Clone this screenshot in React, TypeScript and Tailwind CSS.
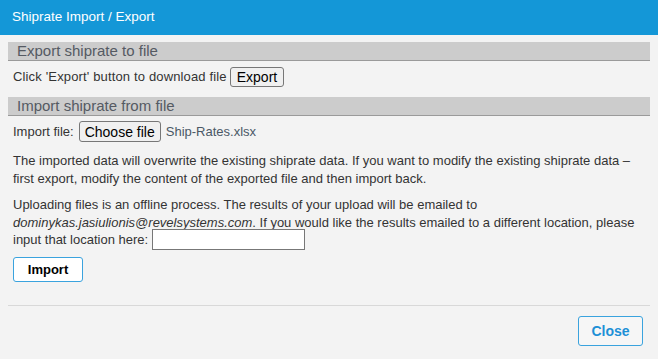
export default function App() {
  return (
    <div className="flex h-[359px] w-[658px] flex-col bg-[#f3f3f3] font-['Liberation_Sans',Arial,sans-serif] text-[13px] text-[#333]">
      <div className="flex h-[35px] shrink-0 items-center bg-[#1497d7] px-3 text-[13.5px] text-white">
        Shiprate Import / Export
      </div>

      <div className="px-2 pt-[7px]">
        <div className="h-[19px] border-b border-[#9a9a9a] bg-[#cccccc] px-[9px] text-[15px] leading-[18px] text-[#555a63]">
          Export shiprate to file
        </div>
        <div className="mt-[6px] flex items-center px-[5px]">
          <span className="tracking-[0.15px]">Click 'Export' button to download file</span>
          <button className="ml-[3px] h-[20px] rounded-[3px] border border-[#777] bg-[#f0f0f0] px-[6px] text-[14px] leading-none text-black">
            Export
          </button>
        </div>

        <div className="mt-[10px] h-[19px] border-b border-[#9a9a9a] bg-[#cccccc] px-[9px] text-[15px] leading-[18px] text-[#555a63]">
          Import shiprate from file
        </div>
        <div className="mt-[5px] flex items-center px-[5px]">
          <span>Import file:</span>
          <button className="ml-[5px] h-[21px] rounded-[3px] border border-[#777] bg-[#f0f0f0] px-[5px] text-[14px] leading-none text-black">
            Choose file
          </button>
          <span className="ml-[5px] text-[#4a5866]">Ship-Rates.xlsx</span>
        </div>

        <p className="mt-[10px] px-[5px] leading-[18px]">
          The imported data will overwrite the existing shiprate data. If you want to modify the existing shiprate data –
          first export, modify the content of the exported file and then import back.
        </p>
        <div className="mt-[8px] px-[5px] leading-[18px]">
          <p>
            Uploading files is an offline process. The results of your upload will be emailed to{" "}
            <i>dominykas.jasiulionis@revelsystems.com</i>. If you would like the results emailed to a different location,
            please
          </p>
          <div className="-mt-[3px] flex items-center gap-[4px]">
            <span>input that location here:</span>
            <input className="h-[21px] w-[153px] border border-[#777] bg-white" />
          </div>
        </div>

        <div className="mt-[7px] px-[5px]">
          <button className="h-[25px] w-[70px] rounded-[3px] border border-[#3aa3de] bg-white text-[13px] font-bold text-black">
            Import
          </button>
        </div>

        <div className="mt-[23px] border-t border-[#d8d8d8]" />

        <div className="flex justify-end pr-[7px] pt-[10px]">
          <button className="h-[30px] w-[65px] rounded-[3px] border border-[#3aa3de] bg-[#f6f6f6] text-[14px] font-bold text-[#1e90d6]">
            Close
          </button>
        </div>
      </div>
    </div>
  );
}
